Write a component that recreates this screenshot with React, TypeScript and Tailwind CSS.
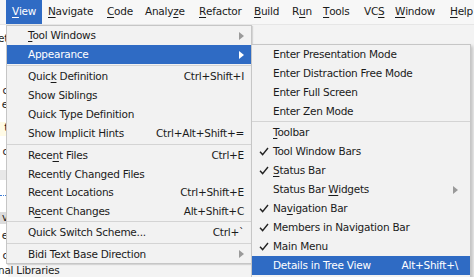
import React from "react";

const FONT = { fontFamily: '"DejaVu Sans", Verdana, sans-serif' };

function U({ children }: { children: React.ReactNode }) {
  return <span className="underline underline-offset-2 decoration-1">{children}</span>;
}

function Arrow({ white }: { white?: boolean }) {
  return (
    <svg width="5" height="8" viewBox="0 0 5 8" className="shrink-0">
      <path d="M0 0 L5 4 L0 8 Z" fill={white ? "#ffffff" : "#9a9a9a"} />
    </svg>
  );
}

function Check() {
  return (
    <svg width="10" height="9" viewBox="0 0 10 9" className="shrink-0">
      <path d="M1 4.8 L3.6 7.6 L9 1" stroke="#222" strokeWidth="1.4" fill="none" />
    </svg>
  );
}

type Item =
  | { sep: true }
  | {
      sep?: false;
      label: React.ReactNode;
      shortcut?: string;
      arrow?: boolean;
      active?: boolean;
      check?: boolean;
      short?: boolean;
    };

function Row({ item, textLeft, right }: { item: Exclude<Item, { sep: true }>; textLeft: string; right: string }) {
  const active = item.active;
  return (
    <div
      className={`${item.short ? "h-[18px]" : "h-[19px]"} flex items-center ${active ? "bg-[#2f6bc4] text-white" : "text-[#1b1b1b]"}`}
    >
      <div className={`${textLeft} flex items-center shrink-0 justify-center`}>{item.check ? <Check /> : null}</div>
      <div className="flex-1 whitespace-nowrap leading-none">{item.label}</div>
      {item.shortcut ? (
        <div className={`whitespace-nowrap leading-none ${right}`}>{item.shortcut}</div>
      ) : null}
      {item.arrow ? (
        <div className={right}>
          <Arrow white={active} />
        </div>
      ) : null}
    </div>
  );
}

function Sep() {
  return (
    <div className="h-[3px] flex flex-col justify-center">
      <div className="h-px bg-[#d4d4d4]" />
    </div>
  );
}

const viewItems: Item[] = [
  { label: <><U>T</U>ool Windows</>, arrow: true },
  { label: "Appearance", arrow: true, active: true },
  { sep: true },
  { label: <>Quic<U>k</U> Definition</>, shortcut: "Ctrl+Shift+I" },
  { label: "Show Siblings" },
  { label: "Quick Type Definition" },
  { label: "Show Implicit Hints", shortcut: "Ctrl+Alt+Shift+=" },
  { sep: true },
  { label: <>Rece<U>n</U>t Files</>, shortcut: "Ctrl+E" },
  { label: "Recently Changed Files", short: true },
  { label: "Recent Locations", shortcut: "Ctrl+Shift+E" },
  { label: <>R<U>e</U>cent Changes</>, shortcut: "Alt+Shift+C", short: true },
  { sep: true },
  { label: "Quick Switch Scheme...", shortcut: "Ctrl+`" },
  { sep: true },
  { label: "Bidi Text Base Direction", arrow: true, short: true },
];

const subItems: Item[] = [
  { label: "Enter Presentation Mode" },
  { label: "Enter Distraction Free Mode" },
  { label: "Enter Full Screen" },
  { label: "Enter Zen Mode", short: true },
  { sep: true },
  { label: <><U>T</U>oolbar</> },
  { label: "Tool Window Bars", check: true },
  { label: <><U>S</U>tatus Bar</>, check: true },
  { label: <>Status Bar <U>W</U>idgets</>, arrow: true },
  { label: <>Na<U>v</U>igation Bar</>, check: true },
  { label: "Members in Navigation Bar", check: true },
  { label: "Main Menu", check: true },
  { label: "Details in Tree View", shortcut: "Alt+Shift+\\", active: true },
];

const menuBar: { label: React.ReactNode; w: string; active?: boolean }[] = [
  { label: <><U>V</U>iew</>, w: "w-[36px]", active: true },
  { label: <><U>N</U>avigate</>, w: "w-[59px]" },
  { label: <><U>C</U>ode</>, w: "w-[38px]" },
  { label: <>Analy<U>z</U>e</>, w: "w-[54px]" },
  { label: <><U>R</U>efactor</>, w: "w-[55px]" },
  { label: <><U>B</U>uild</>, w: "w-[38px]" },
  { label: <>R<U>u</U>n</>, w: "w-[31px]" },
  { label: <><U>T</U>ools</>, w: "w-[41px]" },
  { label: <>VC<U>S</U></>, w: "w-[31px]" },
  { label: <><U>W</U>indow</>, w: "w-[55px]" },
  { label: <><U>H</U>elp</>, w: "w-[31px]" },
];

export default function App() {
  return (
    <div
      className="relative w-[474px] h-[277px] overflow-hidden bg-white text-[10.5px] tracking-[-0.25px] flex flex-col"
      style={FONT}
    >
      <div className="h-[25px] shrink-0 flex bg-[#f7f7f7] pl-[6px] border-b border-[#e6e6e6]">
        {menuBar.map((m, i) => (
          <div
            key={i}
            className={`${m.w} shrink-0 pl-[6px] flex items-center whitespace-nowrap ${m.active ? "bg-[#2f6bc4] text-white" : "text-[#1b1b1b]"}`}
          >
            {m.label}
          </div>
        ))}
      </div>
      <div className="flex flex-1">
        <div className="w-[8px] flex flex-col text-[#222] leading-none">
          <div className="h-[8px]" />
          <div className="h-[14px] flex justify-end whitespace-nowrap overflow-hidden">et</div>
          <div className="h-[38px]" />
          <div className="h-[14px] flex justify-end">c</div>
          <div className="h-[14px] flex justify-end">e</div>
          <div className="h-[9px]" />
          <div className="h-[14px] flex justify-end bg-[#fffbe6]">t</div>
          <div className="h-[10px]" />
          <div className="h-[14px] flex justify-end">c</div>
          <div className="h-[10px]" />
          <div className="h-[10px] bg-[#e8e8e8]" />
          <div className="h-[15px]" />
          <div className="h-[3px] border-t border-dotted border-[#3a7bd5]" />
          <div className="h-[14px]" />
          <div className="h-[12px] flex justify-end bg-[#dcdcdc]">v</div>
          <div className="h-[6px]" />
          <div className="h-[14px] flex justify-end">e</div>
          <div className="h-[6px]" />
          <div className="h-[14px] flex justify-end">c</div>
        </div>
        <div className="flex-1 flex flex-col">
          <div className="h-[19px] bg-[#f3f3f3]" />
          <div className="flex-1 bg-[#f3f3f3]" />
        </div>
      </div>
      <div className="absolute left-[-2px] top-[265px] h-[12px] flex items-center whitespace-nowrap text-[#222]">
        nal Libraries
      </div>

      {/* View menu */}
      <div className="absolute left-[6px] top-[25px] w-[246px] bg-[#f2f2f2] border border-[#c6c6c6] shadow-[1px_1px_1px_rgba(0,0,0,0.12)]">
        {viewItems.map((it, i) =>
          it.sep ? <Sep key={i} /> : <Row key={i} item={it} textLeft="w-[21px]" right="pr-[7px]" />
        )}
      </div>

      {/* Appearance submenu */}
      <div className="absolute left-[251px] top-[44px] w-[220px] bg-[#f2f2f2] border border-[#c6c6c6] shadow-[2px_2px_3px_rgba(0,0,0,0.2)]">
        {subItems.map((it, i) =>
          it.sep ? <Sep key={i} /> : <Row key={i} item={it} textLeft="w-[21px] pl-[3px]" right="pr-[12px]" />
        )}
        <div className="h-[4px]" />
      </div>
    </div>
  );
}
